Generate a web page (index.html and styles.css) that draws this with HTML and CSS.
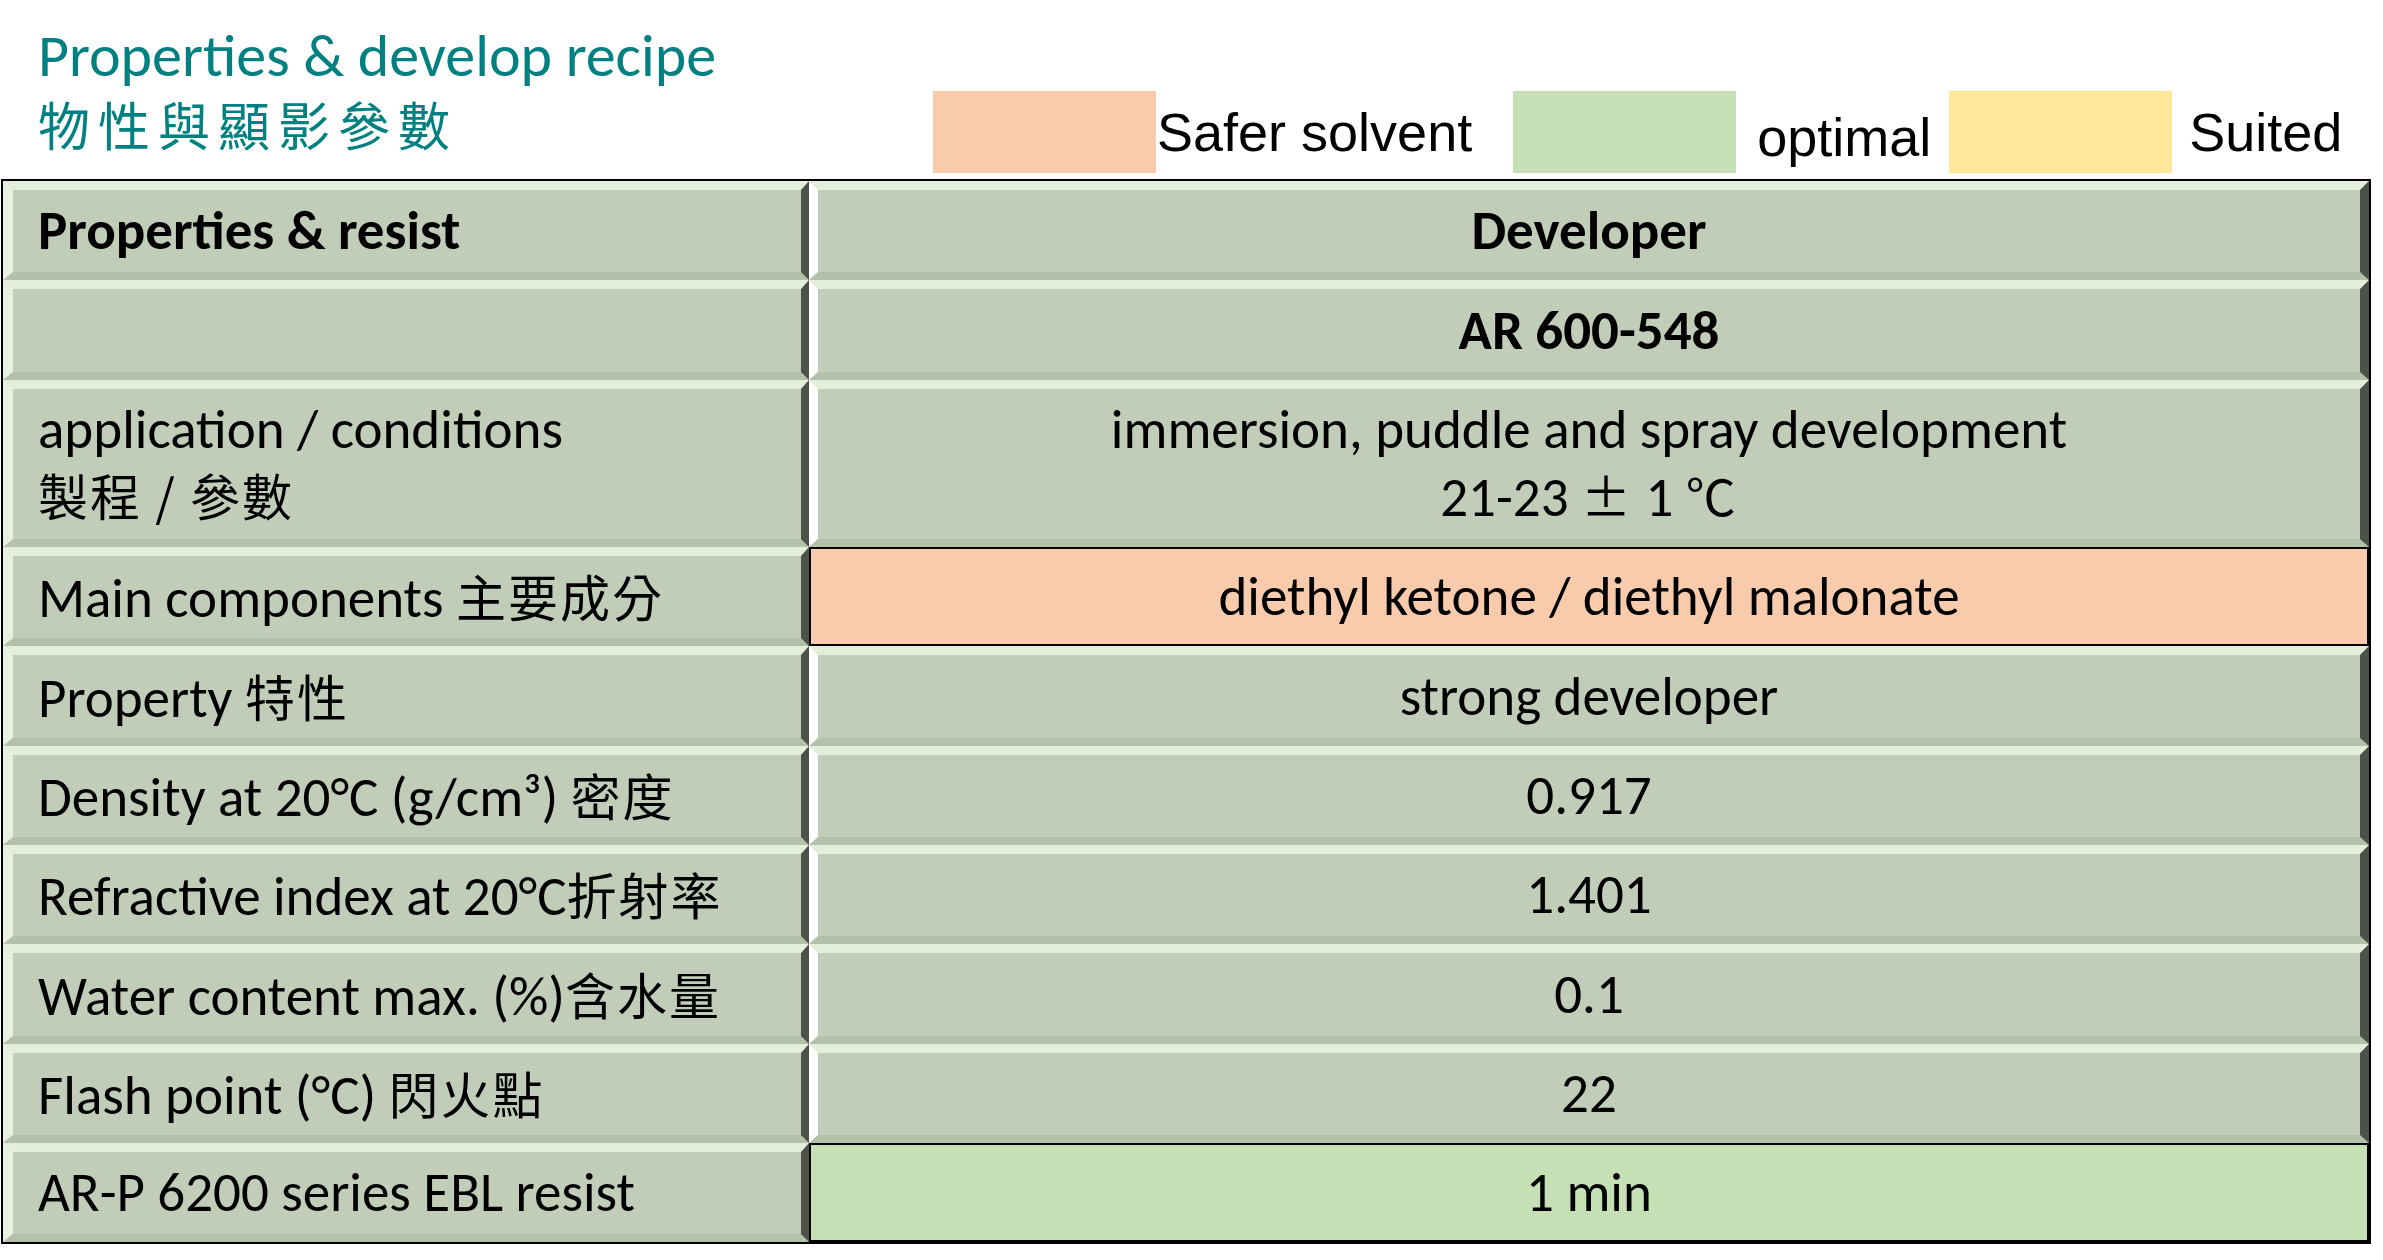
FILE: index.html
```html
<!DOCTYPE html>
<html lang="en">
<head>
<meta charset="utf-8">
<title>Properties &amp; develop recipe</title>
<link rel="stylesheet" href="styles.css">
</head>
<body>
<div class="page">
  <header class="top">
    <div class="title">
      <div class="title-en">Properties &amp; develop recipe</div>
      <div class="title-zh">物性與顯影參數</div>
    </div>
    <div class="legend">
      <span class="swatch swatch-safer"></span>
      <span class="legend-label label-safer">Safer solvent</span>
      <span class="swatch swatch-optimal"></span>
      <span class="legend-label label-optimal">optimal</span>
      <span class="swatch swatch-suited"></span>
      <span class="legend-label label-suited">Suited</span>
    </div>
  </header>

  <table class="props">
    <colgroup>
      <col class="col-key">
      <col class="col-val">
    </colgroup>
    <tbody>
      <tr>
        <td class="key head">Properties &amp; resist</td>
        <td class="val head">Developer</td>
      </tr>
      <tr class="r100">
        <td class="key"></td>
        <td class="val head">AR 600-548</td>
      </tr>
      <tr class="tall">
        <td class="key">application / conditions<br><span class="zh">製程 / 參數</span></td>
        <td class="val">immersion, puddle and spray development<br>21-23 <span class="zh">±</span> 1 <span class="zh">℃</span></td>
      </tr>
      <tr>
        <td class="key">Main components <span class="zh">主要成分</span></td>
        <td class="val hl hl-safer">diethyl ketone / diethyl malonate</td>
      </tr>
      <tr class="r100">
        <td class="key">Property <span class="zh">特性</span></td>
        <td class="val">strong developer</td>
      </tr>
      <tr>
        <td class="key">Density at 20°C (g/cm³) <span class="zh">密度</span></td>
        <td class="val">0.917</td>
      </tr>
      <tr>
        <td class="key">Refractive index at 20°C<span class="zh">折射率</span></td>
        <td class="val">1.401</td>
      </tr>
      <tr class="r100">
        <td class="key">Water content max. (%)<span class="zh">含水量</span></td>
        <td class="val">0.1</td>
      </tr>
      <tr>
        <td class="key">Flash point (°C) <span class="zh">閃火點</span></td>
        <td class="val">22</td>
      </tr>
      <tr>
        <td class="key">AR-P 6200 series EBL resist</td>
        <td class="val hl hl-optimal">1 min</td>
      </tr>
    </tbody>
  </table>
</div>
</body>
</html>
```

FILE: styles.css
```css
html, body {
  margin: 0;
  padding: 0;
  background: #ffffff;
}

body {
  font-family: Carlito, Calibri, Lato, "Noto Sans CJK TC", sans-serif;
  color: #000;
}

.page {
  width: 2383px;
}

/* ---------- header ---------- */
.top {
  display: flex;
  height: 179px;
}

.title {
  flex: none;
  width: 933px;
  box-sizing: border-box;
  padding: 27px 0 0 38px;
  color: #008080;
}

.title-en {
  font-size: 60px;
  line-height: 58px;
  white-space: nowrap;
}

.title-zh {
  font-family: "Noto Sans CJK TC", sans-serif;
  font-size: 52px;
  line-height: 77px;
  letter-spacing: 8px;
  white-space: nowrap;
}

.legend {
  display: flex;
  align-items: flex-start;
  padding-top: 91px;
}

.swatch {
  flex: none;
  width: 223px;
  height: 82px;
}

.swatch-safer { background: #f8cbad; }
.swatch-optimal { background: #c5e0b4; margin-left: 41px; }
.swatch-suited { background: #ffe699; margin-left: 18px; }

.legend-label {
  flex: none;
  font-family: "Liberation Sans", Arial, sans-serif;
  font-size: 54px;
  line-height: 54px;
  white-space: nowrap;
  color: #000;
}

.label-safer { margin: 14px 0 0 1px; }
.label-optimal { margin: 19px 0 0 21px; }
.label-suited { margin: 14px 0 0 17px; }

/* ---------- table ---------- */
.props {
  margin-left: 1px;
  width: 2370px;
  table-layout: fixed;
  border-collapse: separate;
  border-spacing: 0;
  border: 2px solid #000;
}

.col-key { width: 806px; }
.col-val { width: 1560px; }

.props tr { height: 99px; }
.props tr.r100 { height: 100px; }
.props tr.tall { height: 167px; }

.props td {
  box-sizing: border-box;
  padding: 0 25px;
  background: #c1cdb8;
  border-style: solid;
  border-width: 9px 9px 8px 9px;
  border-color: #e3efdb #4d5148 #b3c0aa #ffffff;
  font-size: 55px;
  line-height: 64px;
  vertical-align: middle;
  white-space: nowrap;
}

.props td.key {
  text-align: left;
  border-left-width: 10px;
  border-right-width: 8px;
  border-left-color: #e8f1e1;
}

.props td.val {
  text-align: center;
}

.props td.head {
  font-weight: 700;
}

.props td.hl {
  border: 2px solid #000;
}

.props td.hl-safer { background: #f8cbad; }
.props td.hl-optimal { background: #c5e0b4; }

.zh {
  font-family: "Noto Sans CJK TC", sans-serif;
  font-size: 50px;
  letter-spacing: 2px;
}
```
